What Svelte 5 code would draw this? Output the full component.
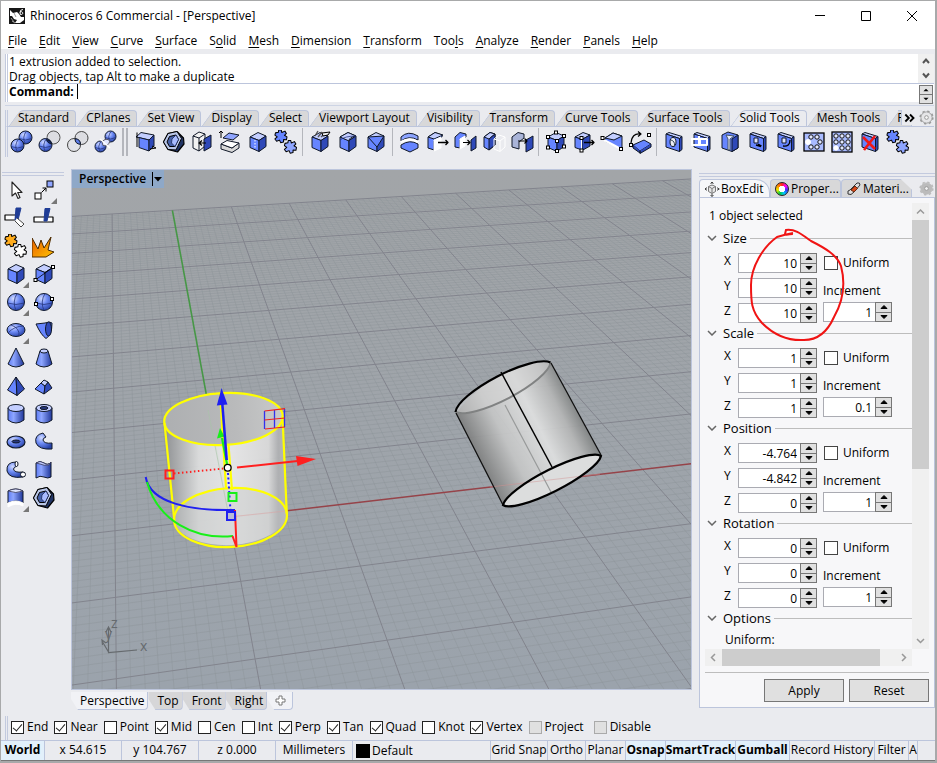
<script>
  const menus = [
    ['', 'F', 'ile'], ['', 'E', 'dit'], ['', 'V', 'iew'], ['', 'C', 'urve'], ['', 'S', 'urface'],
    ['S', 'o', 'lid'], ['', 'M', 'esh'], ['', 'D', 'imension'], ['', 'T', 'ransform'], ['Too', 'l', 's'],
    ['', 'A', 'nalyze'], ['', 'R', 'ender'], ['', 'P', 'anels'], ['', 'H', 'elp']
  ];
  const tabs = ['Standard', 'CPlanes', 'Set View', 'Display', 'Select', 'Viewport Layout', 'Visibility',
    'Transform', 'Curve Tools', 'Surface Tools', 'Solid Tools', 'Mesh Tools', 'R'];

  // ---- icon drawing helpers (24 x 24 canvas) ----
  const p = (d, fill = 'none', stroke = '#101828', w = 1) =>
    `<path d="${d}" fill="${fill}" stroke="${stroke}" stroke-width="${w}" stroke-linejoin="round"/>`;
  const c = (x, y, r, fill = 'none', stroke = '#101828', w = 1) =>
    `<circle cx="${x}" cy="${y}" r="${r}" fill="${fill}" stroke="${stroke}" stroke-width="${w}"/>`;
  const e = (x, y, rx, ry, fill = 'none', stroke = '#101828', w = 1) =>
    `<ellipse cx="${x}" cy="${y}" rx="${rx}" ry="${ry}" fill="${fill}" stroke="${stroke}" stroke-width="${w}"/>`;
  const dot = (x, y) => `<rect x="${x - 1.5}" y="${y - 1.5}" width="3" height="3" fill="#fff" stroke="#000"/>`;
  const LT = '#c3ceff', MD = '#6685ff', DK = '#2f49b8';
  const cube = p('M4 7L12 2.5 20 6 13 10.5Z', LT) + p('M4 7L13 10.5V21.5L4 17.5Z', MD) + p('M13 10.5L20 6V16.5L13 21.5Z', DK);
  const slab = p('M4 4L7 2.5 20 6.5 17.5 8.5Z', LT) + p('M4 4L17.5 8.5V21.5L4 17Z', MD) + p('M17.5 8.5L20 6.5V19.5L17.5 21.5Z', DK);
  const sphere = (x, y, r) => c(x, y, r, 'url(#ball)') +
    p(`M${x - r} ${y + 1}Q${x} ${y + 4} ${x + r} ${y + 1}M${x + 1} ${y - r}Q${x - 4} ${y} ${x} ${y + r}`, 'none', '#26367e', 0.8);
  const arrow = p('M12 12.5H22M19.5 10L22 12.5 19.5 15', 'none', '#000', 1.3);
  const nut = p('M6 3.5L15 1.5 21.5 8 22 14 15.5 22 6 19.5 1.5 12Z', '#223566', '#000', 1.2) +
    p('M6 3.5L15 1.5 19.5 8.5 14 20 6 19.5 1.5 12Z', '#b9c6e8', '#000') +
    p('M7.5 6.5L14 5 16.5 9.5 13 16.5 7.5 16.5 5 12Z', '#4660a8', '#000') +
    p('M10 9L14 5 16.5 9.5 13 16.5 9.5 13Z', '#a9bcff', '#1b2a5c', 0.8);
  const piece = (x, y, f) =>
    `<g transform="translate(${x} ${y}) scale(1.150)">` +
    p('M0 2.5L2.5 2 2.8 0 5 0 5.5 2.2 8.2 1 9.5 3 7.8 4.600 10 6 9.500 8.500 7 8.300 7 10.500 4.500 11 3.500 8.800 1 9.800 -.500 7.800 1.500 6 -.500 4.500Z', f, '#000', 0.9) + `</g>`;
  const puzzle = (a, b) => piece(1.5, 0, a) + piece(11, 10.5, b);

  const icons = {
    union: sphere(15.5, 7.5, 6.5) + sphere(7.5, 15.5, 6.5),
    difference: c(15.5, 7.5, 6.5, '#dcdde2', '#555') + sphere(7.5, 15, 6.5) + p('M8.5 9.5Q13 10 13.8 14Q9 13 8.5 9.5Z', '#122a7a'),
    intersect: c(15.5, 8, 6.5, '#dcdde2', '#444') + c(8, 15, 6.5, '#dcdde299', '#444') + p('M9 8.7Q14.5 9 14.5 14.3Q9 14 9 8.7Z', '#5c7ce8'),
    split: sphere(16.5, 6.5, 5.5) + sphere(6.5, 16.5, 5.5) + p('M8 12Q12 7 16 11Q14 17 9 15.5Z', '#dfe5ff', '#556') + p('M6 9Q12 14 16 18', 'none', '#fff', 1.5),
    sheet: p('M2 7L7 2.5 20 5 15 10Z', LT) + p('M5 7.5L15 10V21L5 17.5Z', MD) + p('M15 10L20 5V16L15 21Z', DK) + p('M3 2.5V17M18 16L22 18 16 19', 'none', '#000'),
    nut,
    extract: p('M3 6L9 2 15 4V16L9 21 3 18Z', '#f2f2f2') + p('M9 8V21M3 6L9 8 15 4', 'none') + p('M14 9L21 5V17L14 21Z', DK) + p('M16 13H9M12 10.5L9 13 12 15.5', 'none', '#000', 1.2),
    planar: p('M5 8L11 3 21 5 15 10Z', '#8fa5ff') + p('M3 14L14 18 21 13V18L14 22.5 3 19Z', '#d9d9d9') + p('M3 14L9 10.5 21 13 14 18Z', '#fff') + p('M3 8V1M1 3L3 1 5 3', 'none', '#000'),
    box: cube + p('M9 10V19', 'none', '#fff', 1).replace('/>', ' stroke-dasharray="1.5"/>'),
    puzzle: puzzle(MD, '#8ea5ff'),
    fillet: cube + p('M7 6L10 1M10 7L14 2M13 7L18 3', 'none', '#555', 1.4) + p('M14 3L22 2 20 5 15 6Z', '#eee', '#000'),
    round: cube + p('M4 7L12 2.5 20 6Q13 7 13 11Z', LT) + p('M4 10Q9 6 20 6', 'none', '#26367e', .8),
    chamfer: cube + p('M4 7L20 6 13 17Z', MD),
    wire: p('M3 7Q10 0 20 6V10Q11 5 3 11Z', '#8ca4ff') + p('M3 15Q12 9 20 14V18L12 22 3 18Z', MD) + p('M3 12Q12 7 20 12', 'none', '#fff', 2.5),
    face: p('M2 7L9 2.5 16 5V7L8 11V20L2 18Z', MD) + p('M2 7L9 2.5 17 5 8 9Z', LT) + p('M8 10L15 7V18L8 21Z', '#fff', '#fff') + arrow,
    faceto: p('M1 7L6 2.5 12 4V7L6 10V18L1 17Z', MD) + p('M17 10L22 6V18L17 21Z', DK) + p('M6 9L11 6V16L6 19Z', '#fff', '#fff') + p('M9 12.5H16M13.5 10L16 12.5 13.5 15', 'none', '#000', 1.2),
    copy: p('M2 7L8 2.5 13 4V15L7 20 2 17Z', MD) + p('M2 7L8 2.5 13 4 7 9Z', LT) + p('M7 9L13 4V15L7 20Z', DK) + p('M12 9L17 5 23 7V17L18 21.5 12 19ZM12 9L18 11 23 7M18 11V21', 'none', '#fff'),
    move: p('M2 7L8 2.5 14 4V8L9 12V19L2 17Z', '#a9b4d8') + p('M16 10L23 6V18L16 22Z', DK) + p('M8 11H17M14.5 8.5L17 11 14.5 13.5', 'none', '#000', 1.2),
    cage: cube + dot(4, 7) + dot(12, 2.5) + dot(20, 6) + dot(20, 16.5) + dot(13, 21) + dot(4, 17.5) + dot(13, 11),
    faceedit: p('M3 7L11 2.5 18 5 10 9.5Z', LT) + p('M3 7L10 9.5V20L3 17.5Z', MD) + p('M10 9.5L18 5V16L10 20.5Z', DK) + p('M9.5 8V21', 'none', '#fff') + dot(9.5, 8) + dot(9.5, 20.5) + arrow,
    edge: p('M5 8L13 3 22 6V19L5 11Z', MD) + p('M5 8L13 3 22 6 14 10Z', LT) + p('M4 10L21 19', 'none', '#fff', 2) + dot(2.5, 8) + dot(21, 19),
    rotate: p('M5 15L16 10 23 14 12 21Z', MD) + p('M5 15V18L12 23V21M12 21V23.5L23 17V14', DK) + p('M3 13Q4 3 12 4M10 1.5L13 4 10 6.5', 'none', '#000', 1.2) + dot(21, 5) + dot(3, 15),
    hole: slab + e(11, 12, 3, 4.5, '#eceef8') + p('M9 10Q13 11 12.5 16', 'none', '#345', 1),
    holes: slab + p('M1 9H9V6M9 9V15H2V10M10 9H17V15H10Z', 'none', '#fff', 2),
    tube: p('M4 5L10 2 20 5V18L14 21.5 4 18Z', MD) + p('M14 9L20 5V18L14 21.5Z', DK) + p('M8 5L16 6 12 9V20H10V9Z', '#e8ecff', '#456'),
    moveHole: slab + p('M8 8H12V13H8Z', '#dfe4ff') + p('M12 14L15.5 16M10 15L15 16.5', 'none', '#000', 1.4),
    rotHole: slab + p('M8 8H12V13H8Z', '#dfe4ff') + p('M16 10Q16 17 9 16', 'none', '#000', 1.4),
    arrayPolar: `<rect x="2" y="3" width="20" height="18" fill="#a9bbff" stroke="#000" stroke-width="1.3"/>` +
      [[9, 7], [15, 7], [18, 12], [15, 17], [9, 17]].map(([x, y]) => c(x, y, 2.2, '#e4e9ff', '#111')).join('') + c(6, 12, 2.5, '#fff', '#fff'),
    array: `<rect x="2" y="2" width="20" height="20" fill="#a9bbff" stroke="#000" stroke-width="1.3"/>` +
      [6, 12, 18].flatMap((y) => [6, 12, 18].map((x) => c(x, y, 2.2, x === 6 && y === 18 ? '#fff' : '#e4e9ff', x === 6 && y === 18 ? '#fff' : '#111'))).join(''),
    del: slab + p('M5 7L17 19M17 6L6 20', 'none', '#f01818', 2.6),

    select: p('M8 4V18L11.5 15 14 20.5 16 19.5 13.7 14.5H18Z', '#fff', '#222', 1.1),
    points: `<rect x="3" y="15" width="6" height="6" fill="#fff" stroke="#000"/><rect x="15" y="3" width="6" height="6" fill="#8fa5ff" stroke="#000"/>` + p('M9.5 14.5L14 10M10.500 10H14V13.500', 'none', '#000'),
    trim: p('M1 9H12V14H1Z', '#fff', '#000', 1.2) + p('M12 2H17L14 14H11Z', '#1f3c96', '#1f3c96') + p('M13 12L20 18 17 21 11 15', '#fff', '#444'),
    cut: p('M2 11H21V16H2Z', '#fff', '#000', 1.2) + p('M13 2.5H18L15 15H12Z', '#1f3c96', '#1f3c96'),
    join: puzzle('#ffac1c', '#fff'),
    explode: p('M0 23V4L6 15 9 6 12 14 19 3 16 16 22 18 14 23Z', 'url(#fire)', '#4a2a00', 1),
    cube,
    boxpts: cube + p('M4 17.5L20 6', 'none', '#000', .8) + dot(3.5, 18) + dot(21, 5),
    sphere: sphere(12, 12, 8.5),
    spherepts: sphere(12, 12, 8.5) + dot(4, 14) + dot(20, 9),
    ellipsoid: e(12, 12, 9, 6.5, 'url(#ball)') + p('M4 15Q10 8 20 8M7 7Q16 10 15 18', 'none', '#26367e', .8),
    paraboloid: p('M4 6Q9 17 14 20.5Q20 17 20 5Q18 3 13 5Z', MD) + e(16.5, 11, 3, 7, DK),
    cone: p('M12 2L4 18Q12 24 20 18Z', 'url(#cyl)'),
    tcone: p('M8 5L4 18Q12 24 20 18L16 5Z', 'url(#cyl)') + e(12, 5, 4, 2, LT),
    pyramid: p('M12 3L3.5 16 13 21.5Z', MD) + p('M12 3L13 21.5 20.5 15Z', DK),
    tpyramid: p('M9 9L3 15 12 20 13 12Z', MD) + p('M13 12L12 20 20 14 16 8Z', DK) + p('M9 9L12 6 16 8 13 12Z', LT),
    cylinder: p('M4 6V18Q12 24 20 18V6Z', 'url(#cyl)') + e(12, 6, 8, 3.5, LT),
    pipe: p('M4 6V18Q12 24 20 18V6Z', 'url(#cyl)') + e(12, 6, 8, 3.5, LT) + e(12, 6, 4, 1.5, '#26367e'),
    torus: e(12, 12, 9, 6, 'url(#ball)', '#101828', 1.2) + e(12, 11.5, 4, 1.5, '#26367e'),
    bend: p('M11 3Q2 5 4 13Q7 20 20 19V13Q12 14 11 10Q11 8 14 7Z', 'url(#ball)'),
    bendcap: p('M12 4Q2 4 3 13Q5 21 19 19V14Q10 15 9.5 11Q10 9 13 8Z', 'url(#ball)') + e(12.5, 6, 1.5, 2.5, '#fff') + e(19, 16.5, 2.5, 2.5, '#fff'),
    extrude: p('M4 5Q8 2 12 5T19 4V19Q16 21 12 19T4 20Z', 'url(#cyl)') + p('M4 5Q8 2 12 5T19 4L17 7Q12 8 8 6Z', LT, '#335', .8),
    loft: p('M4 5Q12 1 19 5V17Q12 13 4 17Z', 'url(#cyl)') + p('M4 17Q12 13 19 17V20Q12 16 4 21Z', '#fff', '#fff') + p('M4 5Q12 1 19 5Q12 8 4 5Z', '#dfe6ff', '#335', .8)
  };

  const toolbar = [
    ['union', 'difference', 'intersect', 'split'],
    ['sheet', 'nut', 'extract', 'planar', 'box', 'puzzle'],
    ['fillet', 'round', 'chamfer'],
    ['wire', 'face', 'faceto', 'copy', 'move'],
    ['cage', 'faceedit', 'edge', 'rotate'],
    ['hole', 'holes', 'tube', 'moveHole', 'rotHole', 'arrayPolar', 'array', 'del', 'puzzle']
  ];
  const side = ['select', 'points', 'trim', 'cut', 'join', 'explode', 'cube', 'boxpts', 'sphere', 'spherepts',
    'ellipsoid', 'paraboloid', 'cone', 'tcone', 'pyramid', 'tpyramid', 'cylinder', 'pipe', 'torus', 'bend',
    'bendcap', 'extrude', 'loft', 'nut'];
  const flyouts = ['points', 'cube', 'sphere', 'ellipsoid', 'loft'];

  // ---- ground plane: project grid units through the camera ----
  function project(X, Y) {
    const a = 0.02005 * X, b = 0.0892 * Y, w = 1 + a + b;
    return ((229 + a * 5800 + b * 109) / w).toFixed(1) + ' ' + ((517.5 - a * 130 - b * 134) / w).toFixed(1);
  }
  function gridPath(step, skip) {
    let d = '';
    for (let i = -30; i <= 100; i += step) {
      if (i % skip !== 0) d += `M${project(i / 10, -5)}L${project(i / 10, 10)}`;
    }
    for (let j = -50; j <= 100; j += step) {
      if (j % skip !== 0) d += `M${project(-3, j / 10)}L${project(10, j / 10)}`;
    }
    return d;
  }
  const minor = gridPath(1, 10);
  const major = gridPath(10, 1000) + `M${project(0, -5)}L${project(0, 0)}M${project(-3, 0)}L${project(0, 0)}`;

  const groups = [
    { name: 'Size', v: ['10', '10', '10'], inc: '1' },
    { name: 'Scale', v: ['1', '1', '1'], inc: '0.1' },
    { name: 'Position', v: ['-4.764', '-4.842', '0'], inc: '1' },
    { name: 'Rotation', v: ['0', '0', '0'], inc: '1' }
  ];
  const osnaps = [['End', 1], ['Near', 1], ['Point', 0], ['Mid', 1], ['Cen', 0], ['Int', 0], ['Perp', 1],
    ['Tan', 1], ['Quad', 1], ['Knot', 0], ['Vertex', 1], ['Project', 0, 1], ['Disable', 0, 1]];
  const toggles = [['Grid Snap', 57, 0], ['Ortho', 38, 0], ['Planar', 40, 0], ['Osnap', 40, 1], ['SmartTrack', 70, 1],
    ['Gumball', 54, 1], ['Record History', 85, 0], ['Filter', 34, 0], ['A', 9, 0]];
</script>

{#snippet icon(name)}
  <svg class="ic" viewBox="0 0 24 24" aria-hidden="true">{@html icons[name]}</svg>
{/snippet}

{#snippet gear()}
  <svg class="gear" viewBox="0 0 16 16" aria-hidden="true">
    <circle class="disc" cx="8" cy="8" r="6" fill="#e6e6e8" stroke="#9a9a9a" stroke-width="1" />
    <circle class="teeth" cx="8" cy="8" r="6.8" fill="none" stroke="#9a9a9a" stroke-width="1.6" stroke-dasharray="2.5 2.84" />
    <circle cx="8" cy="8" r="2" fill="#f4f4f4" stroke="#9a9a9a" />
  </svg>
{/snippet}

{#snippet spinner(id, value)}
  <span class="spin">
    <input {id} type="text" {value} />
    <span class="steps">
      <button aria-label="Increase"><svg viewBox="0 0 14 8"><path d="M4 5.5L7 2.5L10 5.5Z" /></svg></button>
      <button aria-label="Decrease"><svg viewBox="0 0 14 8"><path d="M4 2.5L7 5.5L10 2.5Z" /></svg></button>
    </span>
  </span>
{/snippet}

<svg class="defs" aria-hidden="true">
  <defs>
    <radialGradient id="ball" cx=".35" cy=".3" r=".75"><stop offset="0" stop-color="#d3dcff" /><stop offset=".45" stop-color="#6f8cf5" /><stop offset="1" stop-color="#2742a8" /></radialGradient>
    <linearGradient id="cyl"><stop offset="0" stop-color="#5f7df5" /><stop offset=".35" stop-color="#8ea6ff" /><stop offset="1" stop-color="#20379a" /></linearGradient>
    <linearGradient id="fire" y2="1"><stop offset="0" stop-color="#e85a00" /><stop offset="1" stop-color="#ffc400" /></linearGradient>
  </defs>
</svg>

<div class="desktop">
  <div class="window">
    <header class="title">
      <svg class="logo" viewBox="0 0 16 16" aria-hidden="true">
        <rect width="16" height="16" fill="#161616" />
        <path d="M1 2L4 5 8 4 10 6 12 9 15 9V12L11 15H6L8 12 5 11 3 8 1 8Z" fill="#fff" />
        <path d="M2 10L5 14M3 13L6 15M5 5L7 9" stroke="#999" fill="none" />
        <path d="M14 1.5Q11 1.5 11 4.5T12.6 6.5 14 5 12.5 3.7 11.2 4.7" stroke="#fff" fill="none" />
      </svg>
      <span class="caption">Rhinoceros 6 Commercial - [Perspective]</span>
      <button aria-label="Minimize"><svg viewBox="0 0 12 12"><path d="M1 5.5H11" /></svg></button>
      <button aria-label="Maximize"><svg viewBox="0 0 12 12"><path d="M1.5 1.5H10.5V10.5H1.5Z" /></svg></button>
      <button aria-label="Close"><svg viewBox="0 0 12 12"><path d="M1 1L11 11M11 1L1 11" /></svg></button>
    </header>
    <nav class="menu">
      {#each menus as [a, u, b]}<button>{a}<u>{u}</u>{b}</button>{/each}
    </nav>

    <section class="command">
      <div class="history">
        <div class="lines"><p>1 extrusion added to selection.</p><p>Drag objects, tap Alt to make a duplicate</p></div>
        <div class="hscroll">
          <svg viewBox="0 0 16 28"><path d="M5 9L8 5.5 11 9M5 19.5L8 23 11 19.5" fill="none" stroke="#555" stroke-width="2" /></svg>
        </div>
      </div>
      <div class="prompt">
        <label for="cmd">Command:</label><i class="caret"></i><input id="cmd" type="text" />
        <span class="steps small">
          <button aria-label="Previous"><svg viewBox="0 0 14 8"><path d="M4 5.5L7 2.5L10 5.5Z" /></svg></button>
          <button aria-label="Next"><svg viewBox="0 0 14 8"><path d="M4 2.5L7 5.5L10 2.5Z" /></svg></button>
        </span>
      </div>
    </section>

    <section class="ribbon">
      <div class="tabs">
        {#each tabs as t}<button class="tab" class:on={t === 'Solid Tools'}>{t}</button>{/each}
        <span class="more"><button aria-label="More tabs"><svg viewBox="0 0 12 12"><path d="M2 3L5 6 2 9M6 3L9 6 6 9" fill="none" stroke="#000" stroke-width="1.6" /></svg></button>{@render gear()}</span>
      </div>
      <div class="tools">
        {#each toolbar as g}
          <div class="group">{#each g as name}<button aria-label={name}>{@render icon(name)}</button>{/each}</div>
        {/each}
      </div>
    </section>

    <main>
      <aside class="palette">
        <div class="grip"></div>
        <div class="cells">
          {#each side as name}<button class:fly={flyouts.includes(name)} aria-label={name}>{@render icon(name)}</button>{/each}
        </div>
      </aside>

      <section class="center">
        <div class="viewport">
          <svg class="scene">
            <defs>
              <linearGradient id="wall1"><stop offset="0" stop-color="#8e9092" /><stop offset=".28" stop-color="#dcdddd" /><stop offset=".55" stop-color="#e8e8e8" /><stop offset=".85" stop-color="#dadada" /><stop offset=".93" stop-color="#b0b1b3" /><stop offset="1" stop-color="#b4b5b7" /></linearGradient>
              <linearGradient id="lid1"><stop offset="0" stop-color="#adafb1" /><stop offset=".6" stop-color="#b9babb" /><stop offset="1" stop-color="#c8c9c9" /></linearGradient>
              <linearGradient id="wall2" gradientUnits="userSpaceOnUse" x1="478" y1="460" x2="578" y2="410"><stop offset="0" stop-color="#7b7c7c" /><stop offset=".3" stop-color="#c4c5c5" /><stop offset=".62" stop-color="#dfe0e0" /><stop offset=".85" stop-color="#b5b6b6" /><stop offset="1" stop-color="#808383" /></linearGradient>
              <linearGradient id="sky" y2="1" x2="0"><stop offset="0" stop-color="#a2a5a8" /><stop offset="1" stop-color="#9ba3ac" /></linearGradient>
            </defs>
            <rect width="100%" height="100%" fill="url(#sky)" />
            <g transform="translate(-72 -170)" fill="none">
              <path d={minor} stroke="#8b9298" stroke-width=".6" opacity=".7" />
              <path d={major} stroke="#82848d" stroke-width="1" />
              <path d={`M${project(0, 0)}L${project(10, 0)}`} stroke="#964349" stroke-width="1.500" />
              <path d={`M${project(0, 0)}L${project(0, 10)}`} stroke="#479747" stroke-width="1.600" />

              <path d="M456 413L503 505Q556 505 601 456L551 363Q500 360 456 413Z" fill="url(#wall2)" opacity=".93" />
              <path d="M455.5 412A54.5 15 -27.3 0 1 550.5 362.5A54.5 15 -27.3 0 1 455.5 412Z" fill="#d5d6d6" opacity=".55" />
              <path d="M503 505A55.5 13 -27 0 1 601 456A55.5 13 -27 0 1 503 505Z" fill="#dcdddd" />
              <path d="M490 487L600 474" stroke="#d49a9a" stroke-width="1" opacity=".5" />
              <path d="M550.5 362.5A54.5 15 -27.3 0 1 455.5 412" stroke="#808282" stroke-width="2" />
              <path d="M505 405L551 492" stroke="#979999" stroke-width="1.2" />
              <path d="M456 413L503 505M551 363L601 455" stroke="#111" stroke-width="1.3" />
              <path d="M501 372L552 467" stroke="#000" stroke-width="1.5" />
              <path d="M455.5 412A54.5 15 -27.3 0 1 550.5 362.5M503 505A55.5 13 -27 0 1 601 456A55.5 13 -27 0 1 503 505Z" stroke="#000" stroke-width="2.2" />

              <path d="M164.5 422L174 520A56.5 29.5 -3 0 0 286.7 514L282.5 416Z" fill="url(#wall1)" opacity=".95" />
              <ellipse cx="223.5" cy="419" rx="59.3" ry="26" transform="rotate(-3 223.5 419)" fill="url(#lid1)" />
              <ellipse cx="230.5" cy="517.5" rx="56.5" ry="29.5" transform="rotate(-3 230.5 517.5)" fill="#c4c5c6" opacity=".35" />
              <path d="M208 410L229 517" stroke="#a9c4a9" stroke-width="1" opacity=".6" />
              <path d="M229 517L286 511" stroke="#d8a8a8" stroke-width="1" opacity=".6" />
              <g stroke="#ff0" stroke-width="2.2">
                <ellipse cx="223.5" cy="419" rx="59.3" ry="26" transform="rotate(-3 223.5 419)" />
                <ellipse cx="230.5" cy="517.5" rx="56.5" ry="29.5" transform="rotate(-3 230.5 517.5)" />
                <path d="M164.5 423L174.5 522M282.5 416L286.8 514M220 393L226 488M228.5 445L232 490" />
              </g>

              <path d="M174 473.5L224 468.5" stroke="#ff2020" stroke-width="2" stroke-dasharray="1.5 2.5" />
              <path d="M228 473L230.500 511" stroke="#2020ff" stroke-width="2" stroke-dasharray="2 2.5" />
              <path d="M145.7 477C150 503 190 511 235 510" stroke="#2020f0" stroke-width="2" />
              <path d="M147 482C158 521 195 540 233 536" stroke="#18f018" stroke-width="2" />
              <path d="M235 510L236.5 547 232.5 536" stroke="#ff2020" stroke-width="2" />
              <path d="M227 464L222 438" stroke="#18f018" stroke-width="2.2" /><path d="M220 428L217 438.5 224.5 436.5Z" fill="#18f018" />
              <path d="M226.700 460L222 400" stroke="#2020f0" stroke-width="2.6" /><path d="M221.5 388L216.8 405.5 227.5 404.5Z" fill="#2020f0" />
              <path d="M237 467.5L300 460.800" stroke="#ff2020" stroke-width="2" /><path d="M316 459L296 456 297.500 466Z" fill="#ff2020" />
              <path d="M264.5 411V429M274.5 410V428M284.5 409V427" stroke="#3030f0" stroke-width="1.3" />
              <path d="M264.5 411L285 408.7M264.5 420L285 418M265 429L285 427" stroke="#f02020" stroke-width="1.2" />
              <rect x="165.5" y="470.5" width="8" height="8" stroke="#ff2020" stroke-width="2" />
              <rect x="228.5" y="493" width="8" height="8" stroke="#18f018" stroke-width="2" />
              <rect x="227" y="512" width="8" height="8" fill="#b9bbd8" stroke="#2020f0" stroke-width="2" />
              <circle cx="227.7" cy="467.7" r="3.4" fill="#fff" stroke="#000" stroke-width="1.3" />

              <path d="M108.5 627V652.5L137 650M108.5 652L102 641M106 632L108.5 627 111 632M102.5 645L102 640 106 643" stroke="#666a6e" stroke-width="1.2" />
              <g class="axis"><text x="111" y="628">z</text><text x="105" y="639">y</text><text x="140" y="651">x</text></g>
            </g>
          </svg>
          <div class="vtitle"><span>Perspective</span><button aria-label="Viewport menu"><svg viewBox="0 0 8 5"><path d="M0 0H8L4 4.500Z" /></svg></button></div>
        </div>
        <div class="vtabs">
          <button class="on">Perspective</button><button>Top</button><button>Front</button><button>Right</button>
          <button class="on add" aria-label="New viewport"><svg viewBox="0 0 11 11"><path d="M4 1H7V4H10V7H7V10H4V7H1V4H4Z" fill="#fff" stroke="#777" /></svg></button>
        </div>
      </section>

      <aside class="panel">
        <div class="grip"></div>
        <div class="ptabs">
          <button class="on">
            <svg viewBox="0 0 16 16"><path d="M4.5 5.5L8 4 11.5 5.5V10.5L8 12.5 4.5 10.5ZM4.5 5.5L8 7.5 11.5 5.5M8 7.5V12.5" fill="#e6e6e6" stroke="#777" /><path d="M8 1V3M8 13V15.5M1 8H3M13 8H15.5M6.5 2.5L8 1 9.5 2.5M6.5 14L8 15.5 9.5 14M2.5 6.5L1 8 2.5 9.5M13.5 6.5L15 8 13.5 9.5" fill="none" stroke="#444" /></svg>BoxEdit</button>
          <button><i class="wheel"></i>Proper...</button>
          <button>
            <svg viewBox="0 0 16 16"><path d="M2 13Q1 9 4 9L11 2Q14 1 14 4L8 11Q5 15 2 13Z" fill="#ddd" stroke="#333" /><path d="M5 9L9 5 11.5 7.5 8 11Z" fill="#d84a1c" stroke="#662a10" /></svg>Materi...</button>
          {@render gear()}
        </div>
        <div class="pbody">
          <div class="pane">
            <div class="content">
              <p class="sel">1 object selected</p>
              {#each groups as g}
                <h3><svg viewBox="0 0 10 6"><path d="M1 1L5 5L9 1" /></svg>{g.name}<i></i></h3>
                <div class="rows">
                  <div class="xyz">
                    {#each ['X', 'Y', 'Z'] as ax, i}
                      <div class="row"><label for={g.name + ax}>{ax}</label>{@render spinner(g.name + ax, g.v[i])}</div>
                    {/each}
                  </div>
                  <div class="opts">
                    <label class="uni"><input type="checkbox" />Uniform</label>
                    <label class="inc" for={g.name + 'inc'}>Increment</label>
                    {@render spinner(g.name + 'inc', g.inc)}
                  </div>
                </div>
              {/each}
              <h3><svg viewBox="0 0 10 6"><path d="M1 1L5 5L9 1" /></svg>Options<i></i></h3>
              <p class="last">Uniform:</p>
            </div>
            <div class="vbar"><svg viewBox="0 0 17 17"><path d="M5 10.5L8.5 7 12 10.5" /></svg><b></b><svg viewBox="0 0 17 17"><path d="M5 7L8.5 10.5 12 7" /></svg></div>
          </div>
          <div class="hbar"><svg viewBox="0 0 17 17"><path d="M10 5L6.5 8.5 10 12" /></svg><b></b><svg viewBox="0 0 17 17"><path d="M7 5L10.5 8.5 7 12" /></svg></div>
          <div class="actions"><button>Apply</button><button>Reset</button></div>
          <svg class="mark" viewBox="0 0 100 120" aria-hidden="true">
            <path d="M48 9C41 9 39 11 40 9L41 5C50 4 55 8 66 16C80 23 92 30 96 41C101 60 97 78 89 92C82 108 72 115 59 115C42 116 28 109 17 98C6 86 6 76 6 60C6 42 18 22 32 12C38 10 42 9 48 8" />
          </svg>
        </div>
      </aside>
    </main>

    <section class="osnap">
      {#each osnaps as [name, on, off]}
        <label class:off={off}><input type="checkbox" checked={!!on} disabled={!!off} />{name}</label>
      {/each}
    </section>
    <footer class="status">
      <span class="w44 lit">World</span><span class="w77">x 54.615</span><span class="w77">y 104.767</span><span class="w77">z 0.000</span><span class="w77">Millimeters</span>
      <span class="layer"><i></i>Default</span>
      {#each toggles as [name, w, lit]}<button class:lit={lit} style="width:{w}px">{name}</button>{/each}
      <span class="w17"></span>
    </footer>
  </div>
</div>

<style>
  :global(body) { margin: 0; }
  .desktop, .desktop * { box-sizing: border-box; }
  .desktop { min-height: 100vh; display: flex; padding: 1px 2px 3px 1px; background: #a8a9aa; font: 12px/16px "Open Sans", "Noto Sans", sans-serif; color: #000; }
  .window { flex: 1; min-width: 0; display: flex; flex-direction: column; background: #eaebef; border-bottom: 1px solid #777; overflow: hidden; }
  .defs { position: absolute; width: 0; height: 0; }
  button { font: inherit; color: inherit; background: none; border: 0; padding: 0; margin: 0; white-space: nowrap; }
  p, h3 { margin: 0; font-weight: normal; }
  svg { display: block; flex: none; }
  input { font: inherit; color: inherit; margin: 0; }

  .title { display: flex; align-items: center; height: 29px; background: #fff; padding: 0 0 0 8px; }
  .logo { width: 16px; height: 16px; margin-right: 5px; }
  .caption { flex: 1; }
  .title button { width: 46px; display: flex; justify-content: center; }
  .title button svg { width: 12px; height: 12px; fill: none; stroke: #000; stroke-width: 1; }
  .menu { display: flex; gap: 12px; height: 19px; padding: 2px 7px 0; background: #fff; align-items: center; }
  .menu u { text-underline-offset: 2px; }

  .command { margin: 5px 1px 0 4px; border-left: 3px double #c3cade; height: 48px; background: #fff; display: flex; flex-direction: column; }
  .history { display: flex; height: 30px; border-bottom: 1px solid #bcc5dc; }
  .lines { flex: 1; line-height: 15px; padding-left: 1px; }
  .hscroll { width: 16px; background: #f0f0f0; }
  .hscroll svg { width: 16px; height: 28px; }
  .prompt { display: flex; flex: 1; align-items: stretch; padding-left: 1px; }
  .prompt label { font-weight: bold; }
  .prompt input { border: 0; outline: 0; flex: 1; min-width: 0; background: none; }
  .caret { width: 1px; height: 15px; margin-left: 3px; background: #000; }

  .ribbon { margin: 3px 1px 0 4px; border-top: 1px solid #cdd4e4; height: 64px; padding: 4px 0 0; }
  .tabs { display: flex; height: 17px; border-bottom: 1px solid #bcc5dc; border-left: 3px double #c3cade; padding-left: 1px; position: relative; overflow: hidden; }
  .tab { position: relative; z-index: 0; padding: 0 8px 0 9px; height: 16px; line-height: 16px; flex: none; }
  .tab::before, .tab::after { content: ""; position: absolute; z-index: -1; top: 0; height: 16px; background: #d8d8d9; border: 1px solid #bcc5dc; border-bottom: 0; }
  .tab::before { left: 5px; width: 50%; border-right: 0; border-top-left-radius: 4px; transform: skewX(-36deg); }
  .tab::after { left: 40%; right: 1px; border-left: 0; border-top-right-radius: 4px; }
  .tab.on::before, .tab.on::after { background: #eaebef; }
  .more { position: absolute; right: 0; top: 0; display: flex; align-items: center; gap: 2px; background: #eaebef; padding-left: 1px; border-left: 1px solid #bcc5dc; }
  .more button svg { width: 14px; height: 14px; }
  .gear { width: 15px; height: 15px; }
  .tools { display: flex; height: 30px; align-items: center; border-left: 3px double #c3cade; }
  .group { display: flex; height: 28px; align-items: center; padding-right: 2px; margin-right: 3px; border-right: 1px solid #b4b6bc; }
  .group:first-child { border-right: 6px double #b4b6bc; margin-right: 4px; }
  .group:last-child { border: 0; }
  .group button { width: 28px; display: flex; justify-content: center; }
  .ic { width: 24px; height: 24px; }

  main { flex: 1; display: flex; min-height: 0; }
  .grip { height: 4px; border-top: 1px solid #c3cade; border-bottom: 1px solid #c3cade; }
  .palette { width: 70px; flex: none; padding: 3px 7px 0 1px; }
  .cells { display: grid; grid-template-columns: 28px 28px; grid-auto-rows: 28px; }
  .cells button { position: relative; display: flex; align-items: center; justify-content: center; }
  .fly::after { content: ""; position: absolute; right: 1px; bottom: 0; border-left: 6px solid transparent; border-bottom: 6px solid #777; }
  .center { flex: 1; min-width: 0; display: flex; flex-direction: column; }
  .viewport { position: relative; flex: 1; border: 1px solid #bcc5dc; overflow: hidden; min-height: 300px; }
  .scene { position: absolute; inset: 0; width: 100%; height: 100%; }
  .axis { fill: #666a6e; font: 14px "Open Sans", sans-serif; }
  .vtitle { position: absolute; left: 0; top: 0; display: flex; height: 18px; background: #8ea8c8; padding-left: 7px; font-weight: 600; line-height: 18px; }
  .vtitle button { display: flex; align-items: center; border-left: 1px solid #000; margin: 2px 0 2px 6px; padding: 0 2px 0 1px; }
  .vtitle svg { width: 8px; height: 5px; }
  .vtabs { display: flex; height: 26px; padding-top: 2px; align-items: flex-start; }
  .vtabs button { height: 18px; padding: 0 3px 0 9px; background: #d6d6d8; border: 1px solid #bcc5dc; border-width: 0 1px 1px 0; border-radius: 0 0 4px 0; clip-path: polygon(0 0, 100% 0, 100% 100%, 7px 100%, 0 7px); }
  .vtabs .on { background: #f1f2f6; }
  .vtabs .add { padding: 0 6px 0 8px; display: flex; align-items: center; }
  .add svg { width: 11px; height: 11px; }

  .panel { width: 243px; flex: none; display: flex; flex-direction: column; padding: 4px 0 8px 7px; }
  .ptabs { display: flex; height: 20px; padding-top: 2px; align-items: stretch; }
  .ptabs button { display: flex; align-items: center; gap: 1px; width: 71px; padding-left: 4px; background: #d8d8d9; border: 1px solid #bcc5dc; border-bottom: 0; border-radius: 4px 4px 0 0; }
  .ptabs button:nth-child(3) { clip-path: polygon(0 0, 84% 0, 100% 60%, 100% 100%, 0 100%); }
  .ptabs button.on { background: #f6f7f9; border-radius: 4px 14px 0 0; }
  .ptabs button svg { width: 16px; height: 16px; }
  .ptabs .gear { margin: 2px 1px 0 auto; }
  .ptabs .disc { fill: #bbb; }
  .ptabs .disc, .ptabs .teeth { stroke: #bbb; }
  .wheel { width: 14px; height: 14px; margin-right: 1px; border-radius: 50%; border: 1px solid #222; background: radial-gradient(circle, #fff 0 3px, transparent 3px), conic-gradient(#f22, #f0f, #33f, #0cf, #0c4, #ee0, #f80, #f22); flex: none; }
  .pbody { position: relative; flex: 1; display: flex; flex-direction: column; border: 1px solid #bcc5dc; background: #f7f7f9; padding: 5px; }
  .pane { flex: 1; display: flex; min-height: 0; }
  .content { flex: 1; min-width: 0; overflow: hidden; height: 446px; }
  .sel { margin: 5px 0 4px 4px; }
  h3 { display: flex; align-items: center; height: 20px; font-size: 13px; line-height: 20px; padding-left: 2px; }
  h3 svg { width: 10px; height: 6px; margin-right: 6px; fill: none; stroke: #666; stroke-width: 1.5; }
  h3 i { flex: 1; height: 1px; background: #bdbdbd; margin-left: 3px; }
  .rows { display: flex; height: 75px; padding-left: 19px; gap: 6px; }
  .xyz { display: flex; flex-direction: column; gap: 5px; padding-top: 5px; }
  .row { display: flex; }
  .row label { width: 14px; }
  .spin { display: flex; width: 79px; height: 20px; background: #fff; border: 1px solid #aaabb2; }
  .spin input { flex: 1; min-width: 0; border: 0; padding: 0 3px; text-align: right; background: none; outline: 0; height: 18px; }
  .steps { display: flex; flex-direction: column; width: 17px; margin: -1px -1px -1px 0; border: 1px solid #777; background: #777; gap: 1px; flex: none; }
  .steps button { flex: 1; min-height: 0; background: #e0e0e0; display: flex; align-items: center; justify-content: center; }
  .steps svg { width: 14px; height: 8px; stroke: #000; }
  .steps.small { width: 14px; margin: 1px; }
  .small svg { width: 12px; stroke: none; }
  .opts { display: flex; flex-direction: column; padding-top: 7px; }
  .opts .spin { width: 69px; }
  .uni { display: flex; align-items: center; gap: 5px; height: 16px; padding-left: 1px; }
  .inc { height: 16px; margin: 12px 0 3px; }
  .last { padding: 4px 0 0 20px; }
  input[type="checkbox"] { appearance: none; width: 14px; height: 14px; border: 1px solid #444; background: #fff; flex: none; }
  .vbar { width: 17px; background: #f0f0f0; display: flex; flex-direction: column; }
  .vbar b { height: 249px; background: #cdcdcd; margin-bottom: auto; }
  .vbar svg, .hbar svg { width: 17px; height: 17px; fill: none; stroke: #999; stroke-width: 1.5; }
  .hbar { display: flex; height: 17px; background: #f0f0f0; margin-right: 17px; }
  .hbar b { width: 158px; background: #cdcdcd; }
  .hbar svg:last-child { margin-left: auto; }
  .actions { display: flex; justify-content: flex-end; gap: 5px; border-top: 1px solid #bdbdbd; margin-top: 6px; padding-top: 6px; }
  .actions button { width: 80px; height: 23px; border: 1px solid #777; background: #e0e0e0; }
  .mark { position: absolute; left: 45px; top: 27px; width: 100px; height: 120px; fill: none; stroke: #f01414; stroke-width: 2; pointer-events: none; }

  .osnap { display: flex; align-items: center; gap: 6px; height: 24px; margin-left: 4px; padding: 0 0 2px 3px; border-left: 3px double #c3cade; }
  .osnap label { display: flex; align-items: center; gap: 3px; }
  .osnap input { width: 13px; height: 13px; border-color: #222; }
  .osnap input:checked::after { content: ""; display: block; width: 8px; height: 4px; margin: 2px 0 0 1px; border: solid #222; border-width: 0 0 1px 1px; transform: rotate(-50deg); }
  .osnap .off input { border-color: #aaa; background: #e0e0e0; }
  .osnap .off { margin-right: 4px; }
  .status { display: flex; height: 20px; border-top: 1px solid #bcc5dc; line-height: 17px; }
  .status > * { flex: none; border-right: 1px solid #bcc5dc; text-align: center; overflow: hidden; white-space: nowrap; }
  .status .lit { background: #e2f0fb; font-weight: bold; }
  .status button { display: flex; justify-content: center; }
  .w44 { width: 44px; }
  .w77 { width: 77px; }
  .status .w17 { width: 17px; border: 0; }
  .status .layer { flex: 1; min-width: 0; display: flex; align-items: center; gap: 2px; padding-left: 3px; }
  .layer i { width: 14px; height: 14px; background: #000; }
</style>
